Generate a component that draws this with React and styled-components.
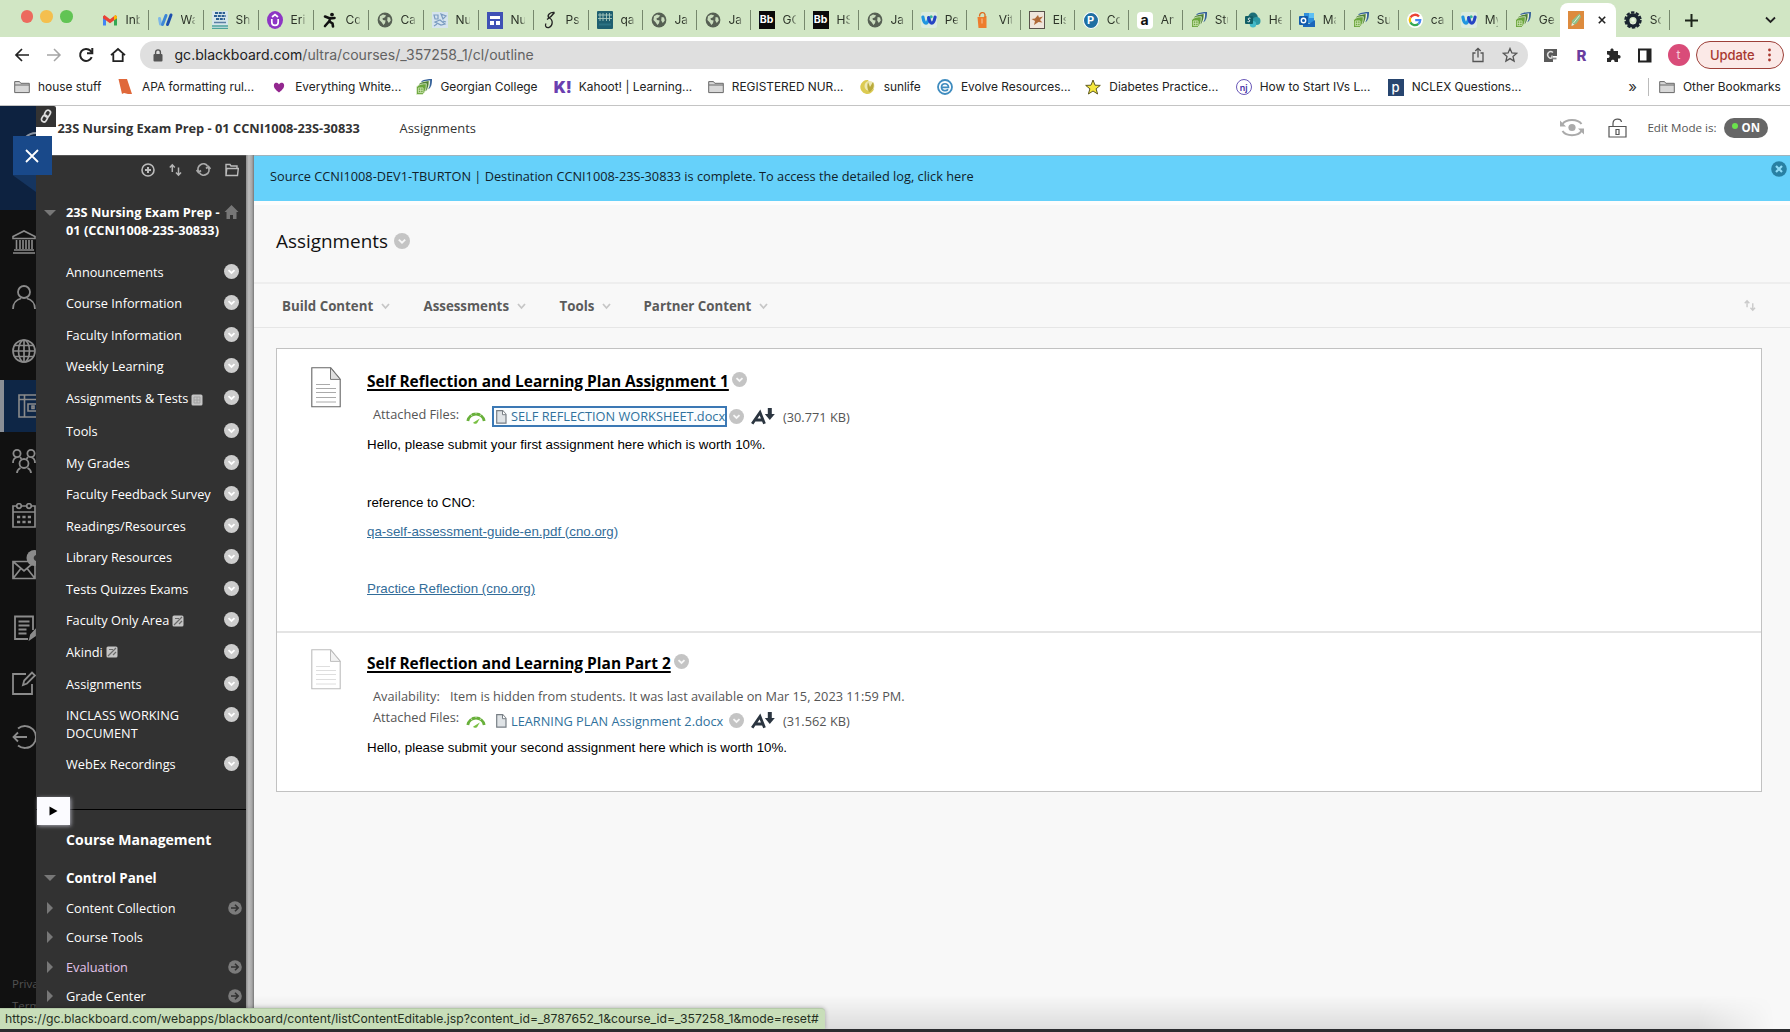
import React from "react";
import styled, { createGlobalStyle, css } from "styled-components";

const ui = `Inter, Roboto, "Liberation Sans", sans-serif`;
const body = `"Open Sans", "Noto Sans", sans-serif`;
const arial = `"Liberation Sans", Arial, sans-serif`;

const Global = createGlobalStyle`
  * { box-sizing: border-box; }
  html, body { margin: 0; padding: 0; }
  body { background: #2b2b2e; overflow: hidden; }
  svg { display: block; flex: none; }
  a { color: inherit; text-decoration: inherit; }
`;

const Window = styled.div`
  position: relative;
  width: 1790px;
  height: 1032px;
  overflow: hidden;
  display: flex;
  flex-direction: column;
  background: #fff;
  font-family: ${body};
`;

/* ---------- browser chrome ---------- */

const TabStrip = styled.div`
  flex: none;
  display: flex;
  height: 37px;
  background: #d1e6c4;
  padding-left: 20.5px;
  font-family: ${ui};
`;

const Lights = styled.div`
  display: flex;
  gap: 7.4px;
  width: 73px;
  padding-top: 10.2px;
`;

const Light = styled.span`
  width: 12.6px;
  height: 12.6px;
  border-radius: 50%;
  background: ${(p) => p.$color};
`;

const Tab = styled.div`
  flex: none;
  display: flex;
  align-items: center;
  gap: 8px;
  width: ${(p) => p.$w}px;
  height: 37px;
  padding: 3px 0 0 8px;
  ${(p) =>
    p.$active &&
    css`
      height: 34px;
      margin-top: 3px;
      padding-top: 0;
      padding-bottom: 1px;
      gap: 14px;
      background: #fff;
      border-radius: 8px 8px 0 0;
    `}
`;

const TabLabel = styled.span`
  width: 16px;
  overflow: hidden;
  white-space: nowrap;
  font-size: 12px;
  line-height: 20px;
  color: #2c3328;
  mask-image: linear-gradient(90deg, #000 65%, rgba(0, 0, 0, 0.25));
`;

const TabRule = styled.span`
  width: 1px;
  height: 20px;
  margin-left: auto;
  background: #76886c;
`;

const StripTail = styled.div`
  flex: 1;
  display: flex;
  align-items: center;
  justify-content: space-between;
  padding: 3px 14px 0 16px;
`;

const Toolbar = styled.div`
  flex: none;
  display: flex;
  align-items: center;
  height: 36px;
  padding: 0 6px 0 12.5px;
  font-family: ${ui};
`;

const NavButtons = styled.div`
  flex: none;
  display: flex;
  gap: 14px;
  width: 127.5px;
`;

const Omnibox = styled.div`
  flex: none;
  display: flex;
  align-items: center;
  width: 1388px;
  height: 28px;
  border-radius: 14px;
  background: #dfdfdf;
  padding: 0 10px 0 13px;
`;

const Url = styled.span`
  flex: 1;
  margin-left: 11.500px;
  font-size: 14.05px;
  line-height: 20px;
  color: #636363;
  b { font-weight: 400; color: #222; }
`;

const OmniIcons = styled.div`
  display: flex;
  align-items: center;
  gap: 17px;
`;

const Extensions = styled.div`
  flex: none;
  display: flex;
  align-items: center;
  gap: 16px;
  padding-left: 14.5px;
  width: 161px;
`;

const Avatar = styled.span`
  flex: none;
  width: 22px;
  height: 22px;
  border-radius: 50%;
  background: #d94c79;
  color: #f5cbd9;
  font-size: 12px;
  line-height: 21px;
  text-align: center;
`;

const UpdateButton = styled.button`
  flex: none;
  display: flex;
  align-items: center;
  justify-content: space-between;
  margin-left: 7px;
  width: 88px;
  height: 28px;
  padding: 0 12px 0 13px;
  border: 1px solid #9c3f38;
  border-radius: 14px;
  background: #fbe9e7;
  color: #a8382f;
  font: 500 13px ${ui};
  letter-spacing: -0.1px;
`;

const BookmarkBar = styled.div`
  flex: none;
  display: flex;
  align-items: center;
  height: 33px;
  padding: 0 8px 4px 14px;
  border-bottom: 1px solid #c4c4c4;
  font-family: ${ui};
`;

const Bookmark = styled.div`
  flex: none;
  display: flex;
  align-items: center;
  gap: 8px;
  width: ${(p) => p.$w}px;
  font-size: 11.9px;
  line-height: 18px;
  white-space: nowrap;
  color: #222;
`;

const More = styled.span`
  flex: 1;
  padding-right: 11px;
  text-align: right;
  font-size: 15px;
  line-height: 18px;
  color: #333;
`;

const BarRule = styled.span`
  width: 1px;
  height: 18px;
  margin-right: 10px;
  background: #bbb;
`;

/* ---------- icons ---------- */

const Globe = () => (
  <svg width="16" height="16" viewBox="0 0 16 16">
    <circle cx="8" cy="8" r="7.4" fill="#566053" />
    <path d="M3 4.2 6 2.6 9.2 3.4 7.6 5.6 5.4 6.4 6 8 8.6 8.6 8 11.2 6.4 13 4.8 10.4 2.4 8zM10.6 5l2.4.6.8 3-2 2.4-1.6-2.6z" fill="#c9dcbd" />
  </svg>
);

const Leaf = ({ s = 16 }) => (
  <svg width={s} height={s} viewBox="0 0 17 17">
    <path d="M5.500 2.500C9 .3 13 0 17 0c0 5-.5 8-3.500 11z" fill="#35619a" />
    <path d="M3.500 4.500C7 2 11 2 15 1.300c0 5-.5 8-3.500 11.500z" fill="#e6f1da" />
    <path d="M3 5.600c3-2.600 7-2.600 10.500-3.400 0 5-1 8-3 10.800z" fill="#4d7f34" />
    <path d="M.5 16.500V8.500C3 5.500 7 5 11 5c0 5-1 9-4 11.500z" fill="#6aa53c" stroke="#e6f2da" strokeWidth=".8" />
    <path d="M2.500 9.500h5v5h-5zM5 9.500v5M2.500 12h5" fill="none" stroke="#cfe6b5" strokeWidth=".9" />
  </svg>
);

const FolderIcon = () => (
  <svg width="16" height="16" viewBox="0 0 16 16">
    <path d="M.7 13.600V2.600h4.800l1.300 1.700h8.500v9.300z" fill="#d8d8d8" stroke="#686868" />
    <path d="M1 6h14" stroke="#686868" />
  </svg>
);

const Webex = () => (
  <svg width="16" height="16" viewBox="0 0 16 16">
    <rect width="16" height="16" rx="2" fill="#dcecdf" />
    <path d="M1.900 5c.6 4 1.800 6.200 3 6.200S7.300 8.500 8 6" fill="none" stroke="#2196e0" strokeWidth="3.200" strokeLinecap="round" />
    <path d="M7.600 5.500c.8 3.800 2 5.700 3.200 5.700 1.400 0 2.600-2.700 3.300-6.200" fill="none" stroke="#2545c4" strokeWidth="3.200" strokeLinecap="round" />
    <circle cx="10.200" cy="4.800" r="1.500" fill="#35b29a" />
  </svg>
);

const Tile = styled.span`
  flex: none;
  display: flex;
  align-items: center;
  justify-content: center;
  width: 16px;
  height: ${(p) => p.$h || 16}px;
  border-radius: ${(p) => p.$r || 0};
  border: ${(p) => p.$bd || "none"};
  background: ${(p) => p.$bg};
  color: ${(p) => p.$fg || "#fff"};
  font: ${(p) => p.$font || `700 10px ${ui}`};
  line-height: 1;
`;

const favicons = {
  gmail: (
    <svg width="16" height="16" viewBox="0 0 16 16">
      <path d="M1 13.500V4l3 2.200v7.300z" fill="#4285f4" />
      <path d="M15 13.500V4l-3 2.200v7.300z" fill="#34a853" />
      <path d="M1 4.500 2.400 3 8 7.300 13.600 3 15 4.500v1.800l-7 5-7-5z" fill="#ea4335" />
      <path d="M12 4.200 13.600 3 15 4.500v1.800l-3 2z" fill="#fbbc04" />
    </svg>
  ),
  wave: (
    <svg width="16" height="16" viewBox="0 0 16 16" fill="none" strokeLinecap="round">
      <path d="M2.500 6.500 3.500 12" stroke="#7db7e8" strokeWidth="3" />
      <path d="M9 3.500 5.500 12.500" stroke="#3c87d6" strokeWidth="3" />
      <path d="M14 3 10.500 12.500" stroke="#1c4fae" strokeWidth="3" />
    </svg>
  ),
  sheet: (
    <svg width="16" height="18" viewBox="0 0 16 18">
      <rect width="16" height="18" fill="#d5e6ea" />
      <path d="M3 2h10M2 5h12M4 8h9" stroke="#2b5f93" strokeWidth="2" strokeDasharray="3 .8" />
      <path d="M2 11.500h12" stroke="#5b7fa4" strokeWidth="1.500" />
      <path d="M0 15h16M0 17.500h16" stroke="#4ea39b" strokeWidth="1.400" />
    </svg>
  ),
  uni: (
    <svg width="16" height="18" viewBox="0 0 16 18">
      <ellipse cx="8" cy="9" rx="8" ry="9" fill="#8d36c4" />
      <path d="M4.800 8v3.200a3.200 3.200 0 0 0 6.400 0V8M5 6l3-2.500L11 6" fill="none" stroke="#fff" strokeWidth="1.700" />
    </svg>
  ),
  runner: (
    <svg width="16" height="16" viewBox="0 0 16 16" fill="none" stroke="#111" strokeLinecap="round">
      <circle cx="10" cy="2.600" r="1.900" fill="#111" stroke="none" />
      <path d="M3 4.500 8 6.500 12.500 6M8.300 6.200 7 10M7 9.500 3 14M7.500 9.500l3 2 .5 3" strokeWidth="2.600" />
    </svg>
  ),
  globe: <Globe />,
  pattern: (
    <svg width="16" height="16" viewBox="0 0 16 16">
      <rect width="16" height="16" fill="#d6e4ee" />
      <path d="M2 3h4v4H3zM9 2l5 2-3 3zM3 10l5-2 5 4-4 1zM2 14l3-2M11 9l3 1" fill="none" stroke="#7a9cc0" strokeWidth="1.200" />
    </svg>
  ),
  blocks: (
    <svg width="16" height="17" viewBox="0 0 16 17">
      <rect width="16" height="17" fill="#3f51b5" />
      <path d="M3 4h10v3H3zM3 9h4v4H3zM9 9h4v4H9z" fill="#fff" />
    </svg>
  ),
  script: (
    <svg width="16" height="18" viewBox="0 0 16 18">
      <path d="M12.500 1.500C8 1 4.500 4 7 7c4.500 1.500 4 8 0 9.500-3 .5-4.500-1.500-3-4M5 8.500C8 6.500 10 5 12.500 1.500" fill="none" stroke="#222" strokeWidth="1.300" />
    </svg>
  ),
  teal: (
    <svg width="16" height="18" viewBox="0 0 16 18">
      <rect width="16" height="18" rx="1" fill="#1e5f70" />
      <path d="M1 4h14M1 7.500h14M3 2v8M6 2v8M9.500 2v8M12.500 2v8" stroke="#a8c8bd" strokeWidth=".9" />
      <path d="M2 13.500h12" stroke="#2c7383" strokeWidth="2" />
    </svg>
  ),
  bb: <Tile $bg="#0a0a0a" $h={18} $font={`700 10.5px ${ui}`}>Bb</Tile>,
  webex: <Webex />,
  bottle: (
    <svg width="16" height="18" viewBox="0 0 16 18">
      <path d="M2.500 6h6l3-1v12h-8z" fill="#ee7d2d" />
      <path d="M4.500 5.500C4.500 1 9 .5 10 3.500v3" fill="none" stroke="#dd6a1d" strokeWidth="1.300" />
      <path d="M7 7.500v5" stroke="#f8c59b" />
    </svg>
  ),
  tree: (
    <svg width="16" height="18" viewBox="0 0 16 18">
      <rect x=".5" y=".5" width="15" height="17" fill="#efe6dc" stroke="#59534c" />
      <path d="M2.500 8 6 7.500 9 4l1 2.500 4-1-3 3.500 2.500 2.500-4-.500L5 14l1-4z" fill="#b06a38" />
    </svg>
  ),
  pearson: <Tile $bg="#1f6fa3" $h={17} $r="50%" $bd="1.5px solid #fff" $font={`700 11px ${ui}`}>P</Tile>,
  amazon: <Tile $bg="#fff" $h={17} $r="4px" $fg="#111" $font={`700 14px ${ui}`}>a</Tile>,
  leaf: <Leaf />,
  share: (
    <svg width="16" height="16" viewBox="0 0 16 16">
      <circle cx="8" cy="5.300" r="4.800" fill="#1c6f78" />
      <circle cx="11.500" cy="9" r="4" fill="#2b98a4" />
      <circle cx="8" cy="12.300" r="3.200" fill="#43b9c8" />
      <rect x="0" y="4" width="8" height="8" rx="1" fill="#125f66" />
      <path d="M5.400 6.300c-2-.7-3 .8-1.400 1.600s.7 2.400-1.400 1.600" fill="none" stroke="#fff" />
    </svg>
  ),
  outlook: (
    <svg width="16" height="16" viewBox="0 0 16 16">
      <path d="M5 1h10v10H5z" fill="#2f8fdc" />
      <path d="M10 1h5v5h-5z" fill="#5cc0f4" />
      <path d="M4 8l6 4 6-4v7H4z" fill="#1b66ba" />
      <rect y="4" width="9" height="9" rx="1" fill="#125cab" />
      <circle cx="4.500" cy="8.500" r="2.200" fill="none" stroke="#fff" strokeWidth="1.400" />
    </svg>
  ),
  google: (
    <svg width="16" height="16" viewBox="0 0 16 16">
      <circle cx="8" cy="8" r="8" fill="#fff" />
      <g fill="none" strokeWidth="2.300">
        <path d="M12 4.600A5.200 5.200 0 0 0 3.400 5.600" stroke="#ea4335" />
        <path d="M3.400 5.600a5.200 5.200 0 0 0 0 4.800" stroke="#fbbc05" />
        <path d="M3.400 10.400a5.200 5.200 0 0 0 8 1.500" stroke="#34a853" />
        <path d="M11.400 11.900A5.200 5.200 0 0 0 13.200 8.200H8.200" stroke="#4285f4" />
      </g>
    </svg>
  ),
  pencil: (
    <svg width="16" height="18" viewBox="0 0 16 18">
      <rect width="16" height="18" fill="#dd8b3e" />
      <path d="M3.500 15 4 9.500 11.500 2.500l1.500 3.500L8.500 12.500z" fill="#8fc08a" />
      <path d="M5.500 12 11.500 4.500" stroke="#e3f1da" />
      <path d="M3.500 15l.5-3 2.300 1.700z" fill="#f5ead9" />
    </svg>
  ),
  gear: (
    <svg width="18" height="18" viewBox="0 0 18 18">
      <circle cx="9" cy="9" r="7.600" fill="none" stroke="#1a2430" strokeWidth="2.200" strokeDasharray="3.400 1.400" />
      <circle cx="9" cy="9.500" r="5.400" fill="none" stroke="#1a2430" strokeWidth="3.600" />
      <circle cx="9" cy="9" r="1.800" fill="#eef6e8" />
      <path d="M6.500 11.500c1 2 4 2 5 0" fill="none" stroke="#eef6e8" strokeWidth="1.200" />
    </svg>
  ),
};

const tabs = [
  ["gmail", "Inb", 55], ["wave", "Wa", 55], ["sheet", "Sh", 55], ["uni", "Eri", 55], ["runner", "Co", 55],
  ["globe", "Ca", 55], ["pattern", "Nu", 55], ["blocks", "Nu", 55], ["script", "Psy", 55], ["teal", "qa", 54],
  ["globe", "Ja", 54], ["globe", "Ja", 54], ["bb", "GC", 54], ["bb", "HS", 54], ["globe", "Ja", 54.2],
  ["webex", "Pe", 54], ["bottle", "Vit", 54], ["tree", "Els", 54], ["pearson", "Co", 54], ["amazon", "An", 54],
  ["leaf", "Stu", 54], ["share", "He", 54], ["outlook", "Ma", 54], ["leaf", "Su", 54], ["google", "ca", 54],
  ["webex", "My", 54], ["leaf", "Ge", 53.5, "bare"],
];

const Stroke = ({ w = 16, h = w, vb = "0 0 16 16", sw = 1.6, c = "#333", children }) => (
  <svg width={w} height={h} viewBox={vb} fill="none" stroke={c} strokeWidth={sw}>{children}</svg>
);

const bookmarks = [
  [<FolderIcon />, "house stuff", 104],
  [<svg width="16" height="18" viewBox="0 0 16 18"><path d="M.5 1h8.500l5 15H10l-4-1-2 1z" fill="#e0683a" /></svg>, "APA formatting rul...", 153.200],
  [<svg width="16" height="16" viewBox="0 0 16 16"><path d="M8 13.500C3.500 10 2.500 8 3 5.500 3.500 3 7 3 8 5.500 9 3 12.500 3 13 5.500 13.500 8 12.500 10 8 13.500z" fill="#93278f" /></svg>, "Everything White...", 145.2],
  [<Leaf />, "Georgian College", 138.4],
  [<Tile $bg="transparent" $fg="#6b3fb0" $font={`900 16px ${ui}`}>K!</Tile>, "Kahoot! | Learning...", 153],
  [<FolderIcon />, "REGISTERED NUR...", 151.9],
  [<svg width="16" height="16" viewBox="0 0 16 16"><path d="M8 1a7 7 0 1 0 6 9z" fill="#dccb52" /><circle cx="9.500" cy="7" r="5" fill="#eee9b4" /><path d="M8 3 10 8l3-5c2 4 0 9-4 10-2-3-2-7-1-10z" fill="#b9aa3a" /></svg>, "sunlife", 77.3],
  [<svg width="16" height="16" viewBox="0 0 16 16" fill="none" stroke="#3f8cbf"><circle cx="8" cy="8" r="7" strokeWidth="1.800" /><path d="M4.500 8.300h7C11.500 3.500 4.500 3.700 4.500 8.200c0 4 5 4.300 6.500 2" strokeWidth="1.700" /></svg>, "Evolve Resources...", 148.4],
  [<svg width="16" height="16" viewBox="0 0 16 16"><path d="M8 1l2 5.200 5.300.2-4.200 3.400 1.500 5.200L8 12l-4.600 3 1.500-5.200L.7 6.400 6 6.200z" fill="#f6e83e" stroke="#5e5920" /></svg>, "Diabetes Practice...", 150.4],
  [<Tile $bg="#fff" $r="50%" $bd="1px solid #6a58b8" $fg="#4a35a8" $font={`600 9px ${ui}`}>nj</Tile>, "How to Start IVs L...", 151.9],
  [<Tile $bg="#27456f" $h={17} $font={`500 13px ${ui}`}>p</Tile>, "NCLEX Questions...", 150],
];

/* ---------- application frame ---------- */

const Page = styled.div`
  position: relative;
  flex: 1;
  min-height: 0;
  display: flex;
`;

const Rail = styled.nav`
  flex: none;
  width: 36px;
  overflow: hidden;
  background: #111;
  display: flex;
  flex-direction: column;
  color: #8b8b8b;
`;

const RailTop = styled.div`
  flex: none;
  height: 104px;
  padding: 26px 0 0 25px;
  background: #0d2240;
`;

const RailItem = styled.div`
  flex: none;
  display: flex;
  align-items: center;
  height: ${(p) => p.$h}px;
  padding-left: 12px;
  ${(p) =>
    p.$active &&
    css`
      background: #0e2646;
      border-left: 4px solid #8a8f96;
      padding-left: 14px;
    `}
`;

const RailLegal = styled.div`
  margin-top: auto;
  height: 59px;
  padding-left: 12px;
  font-size: 11.5px;
  line-height: 22px;
  white-space: nowrap;
  color: #525252;
`;

const Frame = styled.div`
  flex: 1;
  min-width: 0;
  display: flex;
  flex-direction: column;
`;

const CourseHeader = styled.header`
  flex: none;
  display: flex;
  align-items: center;
  height: 49px;
  padding: 0 22.500px 5.500px 21.5px;
  background: #fff;
  color: #333;
  font-size: 12.9px;
  line-height: 20px;
`;

const CourseName = styled.b`
  width: 342px;
  font-size: 12.82px;
`;

const HeaderTools = styled.div`
  margin-left: auto;
  display: flex;
  align-items: center;
`;

const SyncWrap = styled.span`
  margin-right: 24.500px;
`;

const EditLabel = styled.span`
  margin: 0 7px 0 20px;
  font-size: 11.6px;
  color: #555;
`;

const EditPill = styled.span`
  display: flex;
  gap: 4px;
  width: 44px;
  height: 20px;
  padding: 0 0 0 8px;
  border-radius: 10px;
  background: #666;
  color: #fff;
  font-weight: 700;
  font-size: 11.5px;
  line-height: 20px;
`;

const Dot = styled.span`
  width: 6px;
  height: 6px;
  margin-top: 5px;
  border-radius: 50%;
  background: #6be34c;
`;

const Body = styled.div`
  flex: 1;
  min-height: 0;
  display: flex;
`;

/* ---------- course menu ---------- */

const Menu = styled.aside`
  flex: none;
  width: 209.5px;
  overflow: hidden;
  background: #323232;
  border-top: 1px solid #555;
  color: #fff;
`;

const ScrollTrack = styled.div`
  flex: none;
  width: 8.5px;
  background: linear-gradient(90deg, #8d8d8d, #bdbdbd 35%, #a6a6a6 75%, #777);
`;

const MenuTools = styled.div`
  display: flex;
  justify-content: flex-end;
  align-items: center;
  gap: 14px;
  height: 27px;
  padding-right: 6.5px;
`;

const MenuTitle = styled.div`
  display: flex;
  height: 35px;
  margin: 21px 0 17.5px;
  font-weight: 700;
  font-size: 12.78px;
  line-height: 17.5px;
`;

const MenuTitleText = styled.div`
  width: 157.500px;
  white-space: nowrap;
`;

const Gutter = styled.span`
  flex: none;
  width: 30px;
  height: ${(p) => p.$h || "auto"};
  display: flex;
  align-items: center;
  padding-left: 7.5px;
`;

const MenuRow = styled.div`
  display: flex;
  height: ${(p) => p.$h || 31.5}px;
  padding: 7px 7px 0 30px;
  font-size: 12.75px;
  line-height: 17.5px;
`;

const MenuLabel = styled.span`
  flex: 1;
  display: flex;
  align-items: center;
  align-self: flex-start;
  gap: 3px;
  white-space: pre-line;
`;

const MenuRule = styled.div`
  height: 1px;
  margin: 28.5px 0 14.5px;
  background: #000;
`;

const ManagementTitle = styled.div`
  height: 39px;
  padding-left: 30px;
  font-weight: 700;
  font-size: 14.05px;
  line-height: 30px;
`;

const PanelRow = styled.div`
  display: flex;
  align-items: center;
  height: 29.500px;
  padding-right: 3.500px;
  font-size: ${(p) => (p.$head ? "13.4px" : "12.75px")};
  font-weight: ${(p) => (p.$head ? 700 : 400)};
  color: ${(p) => (p.$visited ? "#e3c4ea" : "#fff")};
`;

const Grow = styled.span`
  flex: 1;
`;

const Chevron = ({ s = 15, fill = "#c4c4c4", mark = "#f7f7f7" }) => (
  <svg width={s} height={s} viewBox="0 0 15 15">
    <circle cx="7.500" cy="7.500" r="7.500" fill={fill} />
    <path d="M4.500 6.200 7.500 9l3-2.800" fill="none" stroke={mark} strokeWidth="1.800" />
  </svg>
);
const MenuChevron = () => <Chevron fill="#cdcdcd" mark="#fff" />;

const BadgeBox = styled.span`
  padding-top: ${(p) => (p.$low ? 3 : 0)}px;
`;

const Badge = ({ slash }) => (
  <BadgeBox $low={!slash}>
    <svg width="12" height="12" viewBox="0 0 12 12">
      <rect x=".5" y=".5" width="11" height="11" rx="1.500" fill="#c4c4c4" />
      {slash ? (
        <path d="M2 10 10 2M3 3.500h4M7 9l3-3" stroke="#6a6a6a" strokeWidth="1.200" />
      ) : (
        <path d="M3 3h6v6H3zM3 6h6M6 3v6" fill="none" stroke="#a2a2a2" />
      )}
    </svg>
  </BadgeBox>
);

const UpDown = ({ c = "#b5b5b5", w = 13 }) => (
  <Stroke w={w} h={w + 1} vb="0 0 13 14" c={c} sw={1.5}>
    <path d="M3.300 9V2M.8 4.500 3.300 1.800 5.800 4.500M9.500 4.500V12M7 9.500 9.500 12.200 12 9.500" />
  </Stroke>
);

const Triangle = ({ down, c = "#777" }) => (
  <svg width="12" height="12" viewBox="0 0 12 12">
    <path d={down ? "M0 3h12L6 9z" : "M3 0l6 6-6 6z"} fill={c} />
  </svg>
);

const GoArrow = () => (
  <svg width="14" height="14" viewBox="0 0 14 14">
    <circle cx="7" cy="7" r="6.800" fill="#7b7b7b" />
    <path d="M3 7h7M7 3.800 10.200 7 7 10.200" fill="none" stroke="#323232" strokeWidth="1.600" />
  </svg>
);

const menu = [
  ["Announcements"], ["Course Information"], ["Faculty Information"], ["Weekly Learning"],
  ["Assignments & Tests", 33.5, "plain"], ["Tools"], ["My Grades"], ["Faculty Feedback Survey"],
  ["Readings/Resources"], ["Library Resources"], ["Tests Quizzes Exams"], ["Faculty Only Area", 31.5, "slash"],
  ["Akindi", 32, "slash"], ["Assignments"], ["INCLASS WORKING\nDOCUMENT", 49], ["WebEx Recordings"],
];

/* ---------- content ---------- */

const Content = styled.main`
  flex: 1;
  min-width: 0;
  display: flex;
  flex-direction: column;
  background: #f8f8f8;
`;

const Banner = styled.div`
  flex: none;
  display: flex;
  justify-content: space-between;
  height: 46px;
  padding: 0 3px 0 16px;
  border-top: 1px solid #9fb4bd;
  background: #66d1fa;
  font-size: 12.76px;
  line-height: 40px;
  color: #10222b;
`;

const BannerClose = styled.span`
  padding-top: 5px;
`;

const TitleRow = styled.div`
  flex: none;
  display: flex;
  align-items: center;
  gap: 6px;
  height: 83px;
  padding: 0 0 5px 22px;
  border-top: 4px solid #fdfdfd;
  border-bottom: 2px solid #eeeeee;
  font-size: 18.9px;
  color: #111;
`;

const ActionBar = styled.div`
  flex: none;
  display: flex;
  align-items: center;
  height: 44px;
  padding: 0 34px 0 28px;
  border-bottom: 1px solid #e6e6e6;
  font-size: 13.3px;
  font-weight: 700;
  color: #5b5b5b;
`;

const Action = styled.span`
  display: flex;
  align-items: center;
  gap: 7.5px;
  width: ${(p) => p.$w}px;
  white-space: nowrap;
`;

const List = styled.section`
  flex: none;
  width: 1486px;
  margin: 20px 0 0 22px;
  border: 1px solid #c2c2c2;
  background: #fff;
`;

const Item = styled.article`
  display: flex;
  gap: 26px;
  height: ${(p) => p.$h}px;
  padding: ${(p) => p.$pt}px 0 0 34px;
  ${(p) =>
    p.$rule &&
    css`
      border-bottom: 2px solid #e4e4e4;
    `}
`;

const ItemBody = styled.div`
  display: flex;
  flex-direction: column;
  padding-top: ${(p) => p.$pt}px;
`;

const ItemTitle = styled.h3`
  display: flex;
  align-items: center;
  gap: 3px;
  height: 24px;
  margin: 0;
  font-size: 15.48px;
  line-height: 24px;
  color: #000;
  span { text-decoration: underline; text-decoration-thickness: 1.500px; text-underline-offset: 2px; }
  svg { margin-bottom: 2px; }
`;

const Meta = styled.div`
  display: flex;
  height: ${(p) => p.$h || 20}px;
  margin-top: ${(p) => p.$mt || 0}px;
  padding-left: 6px;
  font-size: 12.78px;
  line-height: ${(p) => p.$h || 20}px;
  white-space: nowrap;
  align-items: center;
  color: #555;
`;

const MetaLabel = styled.span`
  width: ${(p) => p.$w}px;
  align-self: flex-start;
  line-height: ${(p) => p.$lh || 20}px;
`;

const FileLink = styled.a`
  display: flex;
  align-items: center;
  gap: 4.5px;
  width: 235.5px;
  height: 21px;
  margin: 0 2px 0 6px;
  padding-left: 4px;
  line-height: 20px;
  color: #2f719c;
  ${(p) =>
    p.$focus &&
    css`
      padding-left: 2px;
      border: 2px solid #3b78b4;
      background: #fafdff;
      line-height: 17px;
    `}
`;

const Size = styled.span`
  margin-left: 8px;
`;

const Gap = styled.span`
  width: 7px;
`;

const Para = styled.p`
  height: 20px;
  margin: ${(p) => p.$mt}px 0 0;
  font: 13.33px/20px ${arial};
  color: #000;
`;

const ParaLink = styled.a`
  color: #336d99;
  text-decoration: underline;
`;

const Doc = ({ faded }) => (
  <svg width="30" height="41" viewBox="0 0 30 41">
    <path d="M.8.800h19l9.400 11.400v27.600H.8z" fill="#fff" stroke={faded ? "#bdbdbd" : "#666"} strokeWidth="1.100" />
    <path d="M19.500.800v11.600h9.700z" fill={faded ? "#f3f3f3" : "#e0e0e0"} stroke={faded ? "#bdbdbd" : "#777"} />
    <path d="M5 17.500h14M5 21.500h20M5 25.500h20M5 30.500h20M5 35h20" stroke={faded ? "#dedede" : "#aaa"} />
  </svg>
);

const Gauge = () => (
  <svg width="20" height="15" viewBox="0 0 20 15">
    <path d="M1.800 12A8.300 8.300 0 0 1 18.200 12" fill="none" stroke="#68b03a" strokeWidth="2.800" />
    <path d="M4.500 5 6.200 7.200M10 2v3M15.500 5 13.800 7.200" stroke="#fff" strokeWidth=".6" />
    <path d="M7 13.800 13.800 9.500 11.200 13.900c-1.400 1.200-3.200 1.200-4.200-.1z" fill="#79c043" />
  </svg>
);

const FileIcon = () => (
  <svg width="11" height="14" viewBox="0 0 11 14">
    <path d="M.7.700h6L10 4.400v8.800H.7z" fill="#dfe3e6" stroke="#787f85" strokeWidth="1.200" />
    <path d="M6.500.700v4H10" fill="#fff" stroke="#787f85" />
  </svg>
);

const AltFormats = () => (
  <svg width="24" height="17" viewBox="0 0 24 17">
    <path d="M1.200 15.800 9 4.500l4.500 11.300M4.500 12h8" fill="none" stroke="#2b3540" strokeWidth="2.800" />
    <path d="M18.800 0v8" stroke="#2b3540" strokeWidth="4" />
    <path d="M13.800 6h10l-5 6z" fill="#2b3540" />
  </svg>
);

const File = ({ name, size, focus }) => (
  <>
    <MetaLabel $w={92.5} $lh={focus ? 18 : 17}>Attached Files:</MetaLabel>
    <Gauge />
    <FileLink $focus={focus}><FileIcon />{name}</FileLink>
    <Chevron />
    <Gap />
    <AltFormats />
    <Size>{size}</Size>
  </>
);

/* ---------- overlays ---------- */

const LinkTag = styled.div`
  position: absolute;
  left: 36px;
  top: 0;
  display: flex;
  align-items: center;
  justify-content: center;
  width: 20px;
  height: 21px;
  padding-bottom: 2px;
  background: #333;
  border-radius: 0 2px 0 0;
`;

const CloseRibbon = styled.div`
  position: absolute;
  left: 12.5px;
  top: 30px;
  width: 39px;
  height: 56px;
`;

const CloseButton = styled.div`
  display: flex;
  align-items: center;
  justify-content: center;
  height: 39px;
  background: #19498a;
`;

const RibbonFold = styled.div`
  width: 23.5px;
  height: 17px;
  background: #153560;
  clip-path: polygon(0 0, 100% 0, 100% 100%);
`;

const Toggle = styled.div`
  position: absolute;
  left: 37px;
  top: 691px;
  display: flex;
  align-items: center;
  justify-content: center;
  width: 33px;
  height: 28px;
  background: #fbfbff;
  box-shadow: 1px 1px 4px rgba(220, 220, 235, 0.7);
`;

const BottomShade = styled.div`
  position: absolute;
  left: 254px;
  right: 0;
  bottom: 3px;
  height: 34px;
  background: linear-gradient(180deg, rgba(0, 0, 0, 0), rgba(0, 0, 0, 0.11));
  mask-image: linear-gradient(90deg, #000 94%, transparent 99%);
`;

const BottomEdge = styled.div`
  position: absolute;
  left: 0;
  right: 0;
  bottom: 0;
  height: 3px;
  background: #2b2c2f;
`;

const Status = styled.div`
  position: absolute;
  left: 0;
  bottom: 3px;
  width: 825px;
  height: 21px;
  padding-left: 5px;
  border-top: 1px solid #b4caa8;
  border-radius: 0 4px 0 0;
  background: #c8deb9;
  font: 12.19px/20px ${ui};
  white-space: nowrap;
  color: #26301f;
  box-shadow: 0 0 4px rgba(0, 0, 0, 0.3);
`;

const railIcons = [
  [63, <Stroke w={24} vb="0 0 24 24" c="#8b8b8b" sw={1.6}><path d="M1 6.500 12 1l11 5.500v2H1zM4.500 10v9M8 10v9M11 10v9M14 10v9M17 10v9M20 10v9M2 20h20M1 23h22" /></Stroke>],
  [48, <Stroke w={24} vb="0 0 24 24" c="#8b8b8b" sw={1.8}><circle cx="12" cy="7" r="6" /><path d="M1 24c0-6 4-9.500 8-10.500M23 24c0-6-4-9.500-8-10.500" /></Stroke>],
  [59, <Stroke w={24} vb="0 0 24 24" c="#8b8b8b" sw={1.7}><circle cx="12" cy="12" r="11" /><ellipse cx="12" cy="12" rx="5.500" ry="11" /><path d="M12 1v22M1 12h22M3 6.500h18M3 17.500h18" /></Stroke>],
  [52, <Stroke w={24} vb="0 0 24 24" c="#8b8b8b" sw={1.6}><path d="M1 1h22v22H1zM6.500 1v22M1 5.500h22M10 10h9v7h-9zM14 12h2v2.500h-2z" /></Stroke>, true],
  [58, <Stroke w={24} vb="0 0 24 24" c="#8b8b8b" sw={1.8}><circle cx="5" cy="4.500" r="3.600" /><circle cx="19" cy="4.500" r="3.600" /><circle cx="12" cy="14.500" r="4.500" /><path d="M1 14c0-3 1.500-5 3.500-5.500M23 14c0-3-1.500-5-3.500-5.500M5 24c0-2.500 1.500-4 3.500-5M19 24c0-2.500-1.500-4-3.500-5M8 8l1.500 2M16 8l-1.500 2" /></Stroke>],
  [50, <Stroke w={24} h={25} vb="0 0 24 25" c="#8b8b8b" sw={1.7}><path d="M4 3H1v21h22V3h-3M9.500 3h5M1 9h22" /><circle cx="7" cy="3" r="2.300" /><circle cx="17" cy="3" r="2.300" /><path d="M5 14h14M5 19h14" strokeWidth="2.400" strokeDasharray="3.200 2.200" /></Stroke>],
  [50, <svg width="24" height="30" viewBox="0 0 24 30"><g fill="none" stroke="#8b8b8b" strokeWidth="1.700"><path d="M1 11.500h22v17H1zM1 11.500l11 9.500 11-9.500M1 28.500 8.500 19M23 28.500 15.500 19" /></g><circle cx="22.500" cy="8" r="8" fill="#8b8b8b" /><path d="M24 5c-3 1-3 5 0 6z" fill="#333" /></svg>],
  [75, <Stroke w={24} h={26} vb="0 0 24 26" c="#8b8b8b" sw={1.8}><path d="M21 15V1.500H3V24h13M6.500 6.500h11M6.500 10.500h11M6.500 14.500h8M6.500 18.500h8" /><path d="M18 24l1-4 4-4.500v5z" fill="#8b8b8b" /></Stroke>],
  [36, <Stroke w={24} vb="0 0 24 24" c="#8b8b8b" sw={1.8}><path d="M14 3H1v20h19v-10M11 14l1.200-4.500L20 1.500l3 3-8 8z" /></Stroke>],
  [72, <Stroke w={24} vb="0 0 24 24" c="#8b8b8b" sw={1.8}><path d="M6 3.500a11 11 0 1 1 0 17M15 12H1.500M6 7.500 1.500 12 6 16.500" /></Stroke>],
];

export default function App() {
  return (
    <Window>
      <Global />
      <TabStrip>
        <Lights>
          <Light $color="#ec6a5e" />
          <Light $color="#f4bf4e" />
          <Light $color="#61c454" />
        </Lights>
        {tabs.map(([icon, label, w, bare], i) => (
          <Tab key={i} $w={w}>
            {favicons[icon]}
            <TabLabel>{label}</TabLabel>
            {!bare && <TabRule />}
          </Tab>
        ))}
        <Tab $w={55.5} $active>
          {favicons.pencil}
          <Stroke w={8} vb="0 0 10 10" sw={2} c="#222"><path d="M1 1l8 8M9 1 1 9" /></Stroke>
        </Tab>
        <Tab $w={53.5}>
          {favicons.gear}
          <TabLabel>Sc</TabLabel>
          <TabRule />
        </Tab>
        <StripTail>
          <Stroke w={13} vb="0 0 13 13" sw={2} c="#1d241a"><path d="M6.500 0v13M0 6.500h13" /></Stroke>
          <Stroke w={11} h={8} vb="0 0 11 8" sw={1.8} c="#222"><path d="M1 1.500 5.500 6 10 1.500" /></Stroke>
        </StripTail>
      </TabStrip>

      <Toolbar>
        <NavButtons>
          <Stroke w={18} vb="0 0 18 18" sw={1.7} c="#222"><path d="M16 9H3M9 3 3 9l6 6" /></Stroke>
          <Stroke w={18} vb="0 0 18 18" sw={1.5} c="#a5a5a5"><path d="M2 9h13M9 3l6 6-6 6" /></Stroke>
          <Stroke w={18} vb="0 0 18 18" sw={2} c="#222"><path d="M14.700 11.200A6 6 0 1 1 13.500 4.800L15 6.500" /><path d="M15.300 2v5.300H10" /></Stroke>
          <Stroke w={18} vb="0 0 18 18" sw={1.8} c="#222"><path d="M2 9.200 9 3l7 6.200M4.300 8v7.200h9.400V8" /></Stroke>
        </NavButtons>
        <Omnibox>
          <svg width="10" height="13" viewBox="0 0 10 13"><rect x=".5" y="5" width="9" height="7.500" rx="1" fill="#555" /><path d="M2.600 5V3.300a2.400 2.400 0 0 1 4.800 0V5" fill="none" stroke="#555" strokeWidth="1.400" /></svg>
          <Url><b>gc.blackboard.com</b>/ultra/courses/_357258_1/cl/outline</Url>
          <OmniIcons>
            <Stroke w={14} h={16} vb="0 0 14 16" sw={1.3} c="#555"><path d="M4.500 6H2v8.500h10V6H9.500M7 10.500V1.500M4.300 4 7 1.300 9.700 4" /></Stroke>
            <Stroke w={16} vb="0 0 16 16" sw={1.3} c="#555"><path d="M8 1.500 9.900 6l4.700.4-3.600 3.100 1.100 4.600L8 11.600l-4.100 2.500L5 9.500 1.400 6.400 6.100 6z" /></Stroke>
          </OmniIcons>
        </Omnibox>
        <Extensions>
          <svg width="15" height="15" viewBox="0 0 15 15"><path d="M1 1h13v7h-4v6H1z" fill="#5a5a5a" /><path d="M10 4.500c-3-2.500-6.500.5-5 3.800.8 1.800 2.500 2.200 4 1.500V7.500" fill="none" stroke="#ddd" strokeWidth="1.500" /><path d="M9.500 10.500h4" stroke="#888" strokeWidth="1.800" /></svg>
          <Tile $bg="#fff" $fg="#6a3d9e" $font={`800 15px ${ui}`}>R</Tile>
          <svg width="15" height="16" viewBox="0 0 15 16"><path d="M1 4h3.500C3.500.5 8.500.5 7.500 4H12v4c3.500-1 3.500 4.500 0 3.500V15H8.500c.8-3-4-3-3.500 0H1v-4c3.500.5 3.500-4 0-3.500z" fill="#2a2a2a" /></svg>
          <svg width="15" height="15" viewBox="0 0 15 15"><path d="M2 1.500h11.500v12H2z" fill="#fff" stroke="#222" strokeWidth="2" /><path d="M9.500 2h4v11.500h-4z" fill="#222" /></svg>
          <Avatar>t</Avatar>
        </Extensions>
        <UpdateButton>
          Update
          <svg width="3" height="14" viewBox="0 0 3 14" fill="#a8382f"><circle cx="1.500" cy="2" r="1.400" /><circle cx="1.500" cy="7" r="1.400" /><circle cx="1.500" cy="12" r="1.400" /></svg>
        </UpdateButton>
      </Toolbar>

      <BookmarkBar>
        {bookmarks.map(([icon, text, w]) => (
          <Bookmark key={text} $w={w}>{icon}{text}</Bookmark>
        ))}
        <More>»</More>
        <BarRule />
        <Bookmark $w={123}><FolderIcon />Other Bookmarks</Bookmark>
      </BookmarkBar>

      <Page>
        <Rail>
          <RailTop>
            <Stroke w={12} h={8} vb="0 0 12 8" c="#8b95a3" sw={2}><path d="M1 5c3-3 7-4 11-4" /></Stroke>
          </RailTop>
          {railIcons.map(([h, icon, active], i) => (
            <RailItem key={i} $h={h} $active={active}>{icon}</RailItem>
          ))}
          <RailLegal>Privacy<br />Terms</RailLegal>
        </Rail>

        <Frame>
          <CourseHeader>
            <CourseName>23S Nursing Exam Prep - 01 CCNI1008-23S-30833</CourseName>
            <span>Assignments</span>
            <HeaderTools>
              <SyncWrap>
                <svg width="24" height="20" viewBox="0 0 24 20">
                  <circle cx="12" cy="9.500" r="3.600" fill="#aaa" />
                  <path d="M2.500 6C6 .5 18 .5 21.500 6M2.500 13C6 18.500 18 18.500 21.500 13" fill="none" stroke="#aaa" strokeWidth="2" />
                  <path d="M0 2.500v6h6zM24 16.500v-6h-6z" fill="#aaa" />
                </svg>
              </SyncWrap>
              <Stroke w={19} h={20} vb="0 0 19 20" c="#555" sw={1.2}><path d="M1 8.500h17V19H1zM5 8.500V5.500C5 0 13 0 13.500 4M8 11.500h3v5H8z" /></Stroke>
              <EditLabel>Edit Mode is:</EditLabel>
              <EditPill><Dot />ON</EditPill>
            </HeaderTools>
          </CourseHeader>

          <Body>
            <Menu>
              <MenuTools>
                <Stroke w={14} vb="0 0 14 14" c="#bbb" sw={1.6}><circle cx="7" cy="7" r="6" /><path d="M7 4v6M4 7h6" strokeWidth="2" /></Stroke>
                <UpDown />
                <Stroke w={15} vb="0 0 15 15" c="#aaa" sw={1.8}><path d="M2.500 9.500a5.300 5.300 0 0 1 9-5.500M12.500 5.500a5.300 5.300 0 0 1-9 5.500" /><path d="M.5 8l2 2.500L5 8.500M10 6.500l2.500-2 2 2.500" /></Stroke>
                <Stroke w={14} vb="0 0 14 14" c="#bbb" sw={1.4}><path d="M1 12.500v-11h4l1 1.500h6v2.500M1 12.500 1.800 5.500h11.500L12.500 12.500z" /></Stroke>
              </MenuTools>
              <MenuTitle>
                <Gutter $h="17px"><Triangle down /></Gutter>
                <MenuTitleText>23S Nursing Exam Prep -<br />01 (CCNI1008-23S-30833)</MenuTitleText>
                <svg width="15" height="16" viewBox="0 0 14 16"><path d="M7 1l7 7h-2v7H8.500v-4h-3v4H2V8H0z" fill="#777" /></svg>
              </MenuTitle>
              {menu.map(([label, h, badge], i) => (
                <MenuRow key={i} $h={h}>
                  <MenuLabel>{label}{badge && <Badge slash={badge === "slash"} />}</MenuLabel>
                  <MenuChevron />
                </MenuRow>
              ))}
              <MenuRule />
              <ManagementTitle>Course Management</ManagementTitle>
              <PanelRow $head><Gutter><Triangle down /></Gutter><Grow>Control Panel</Grow></PanelRow>
              <PanelRow><Gutter><Triangle /></Gutter><Grow>Content Collection</Grow><GoArrow /></PanelRow>
              <PanelRow><Gutter><Triangle /></Gutter><Grow>Course Tools</Grow></PanelRow>
              <PanelRow $visited><Gutter><Triangle /></Gutter><Grow>Evaluation</Grow><GoArrow /></PanelRow>
              <PanelRow><Gutter><Triangle /></Gutter><Grow>Grade Center</Grow><GoArrow /></PanelRow>
            </Menu>
            <ScrollTrack />

            <Content>
              <Banner>
                <span>Source CCNI1008-DEV1-TBURTON | Destination CCNI1008-23S-30833 is complete. To access the detailed log, click here</span>
                <BannerClose>
                  <svg width="16" height="16" viewBox="0 0 16 16"><circle cx="8" cy="8" r="7.800" fill="#2880a3" /><path d="M5 5l6 6M11 5l-6 6" stroke="#8edcf8" strokeWidth="2.200" /></svg>
                </BannerClose>
              </Banner>
              <TitleRow>Assignments<Chevron s={16} /></TitleRow>
              <ActionBar>
                {[["Build Content", 141.5], ["Assessments", 136], ["Tools", 84], ["Partner Content", 140]].map(([t, w]) => (
                  <Action key={t} $w={w}>
                    {t}
                    <Stroke w={9} h={8} vb="0 0 9 8" c="#c6c6c6" sw={1.8}><path d="M1 2l3.500 4L8 2" /></Stroke>
                  </Action>
                ))}
                <Grow />
                <UpDown c="#cacaca" w={12} />
              </ActionBar>

              <List>
                <Item $h={284} $pt={17.5} $rule>
                  <Doc />
                  <ItemBody $pt={2}>
                    <ItemTitle><span>Self Reflection and Learning Plan Assignment 1</span><Chevron /></ItemTitle>
                    <Meta $h={24} $mt={12}>
                      <File name="SELF REFLECTION WORKSHEET.docx" size="(30.771 KB)" focus />
                    </Meta>
                    <Para $mt={6.5}>Hello, please submit your first assignment here which is worth 10%.</Para>
                    <Para $mt={37.5}>reference to CNO:</Para>
                    <Para $mt={9}><ParaLink>qa-self-assessment-guide-en.pdf (cno.org)</ParaLink></Para>
                    <Para $mt={37.5}><ParaLink>Practice Reflection (cno.org)</ParaLink></Para>
                  </ItemBody>
                </Item>
                <Item $h={158} $pt={15.5}>
                  <Doc faded />
                  <ItemBody $pt={2}>
                    <ItemTitle><span>Self Reflection and Learning Plan Part 2</span><Chevron /></ItemTitle>
                    <Meta $mt={11}>
                      <MetaLabel $w={77}>Availability:</MetaLabel>
                      <span>Item is hidden from students. It was last available on Mar 15, 2023 11:59 PM.</span>
                    </Meta>
                    <Meta $h={24} $mt={3}>
                      <File name="LEARNING PLAN Assignment 2.docx" size="(31.562 KB)" />
                    </Meta>
                    <Para $mt={5.5}>Hello, please submit your second assignment here which is worth 10%.</Para>
                  </ItemBody>
                </Item>
              </List>
            </Content>
          </Body>
        </Frame>

        <LinkTag>
          <Stroke w={14} vb="0 0 14 14" c="#ddd" sw={1.7}><rect x="6" y="1" width="5" height="7" rx="2.500" transform="rotate(30 8.500 4.500)" /><rect x="3" y="6" width="5" height="7" rx="2.500" transform="rotate(30 5.500 9.500)" /></Stroke>
        </LinkTag>
        <CloseRibbon>
          <CloseButton>
            <Stroke w={14} vb="0 0 14 14" c="#fff" sw={1.8}><path d="M1 1l12 12M13 1 1 13" /></Stroke>
          </CloseButton>
          <RibbonFold />
        </CloseRibbon>
        <Toggle>
          <svg width="9" height="10" viewBox="0 0 9 10"><path d="M.5.500 8.500 5 .5 9.500z" fill="#000" /></svg>
        </Toggle>
        <BottomShade />
        <Status>https://gc.blackboard.com/webapps/blackboard/content/listContentEditable.jsp?content_id=_8787652_1&amp;course_id=_357258_1&amp;mode=reset#</Status>
        <BottomEdge />
      </Page>
    </Window>
  );
}
